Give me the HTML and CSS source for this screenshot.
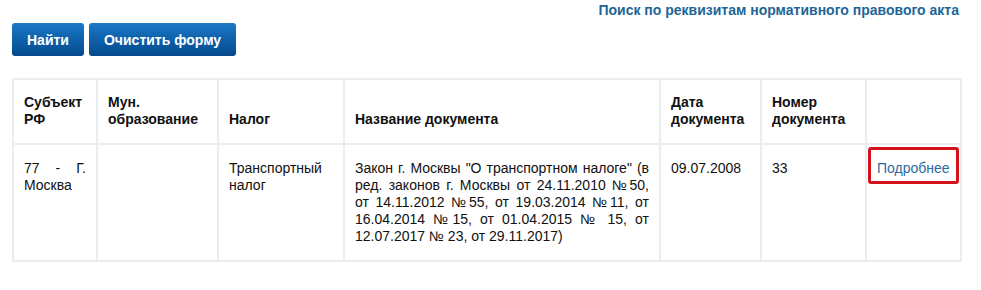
FILE: index.html
```html
<!DOCTYPE html>
<html lang="ru">
<head>
<meta charset="utf-8">
<link rel="stylesheet" href="styles.css">
</head>
<body>
<div class="page">
  <div class="top-link"><a href="#">Поиск по реквизитам нормативного правового акта</a></div>
  <div class="actions">
    <button class="btn">Найти</button>
    <button class="btn">Очистить форму</button>
  </div>
  <table class="results">
    <colgroup>
      <col class="c1"><col class="c2"><col class="c3"><col class="c4"><col class="c5"><col class="c6"><col class="c7">
    </colgroup>
    <thead>
      <tr>
        <th>Субъект РФ</th>
        <th>Мун. образование</th>
        <th>Налог</th>
        <th>Название документа</th>
        <th>Дата документа</th>
        <th>Номер документа</th>
        <th></th>
      </tr>
    </thead>
    <tbody>
      <tr>
        <td class="just">77 - Г. Москва</td>
        <td></td>
        <td>Транспортный налог</td>
        <td class="just">Закон г. Москвы "О транспортном налоге" (в ред. законов г. Москвы от 24.11.2010 №50, от 14.11.2012 №55, от 19.03.2014 №11, от 16.04.2014 №15, от 01.04.2015 № 15, от 12.07.2017 № 23, от 29.11.2017)</td>
        <td>09.07.2008</td>
        <td>33</td>
        <td><a href="#" class="more">Подробнее</a></td>
      </tr>
    </tbody>
  </table>
</div>
</body>
</html>
```

FILE: styles.css
```css
html, body {
  margin: 0;
  padding: 0;
  background: #ffffff;
}
body {
  font-family: "Liberation Sans", Arial, sans-serif;
  font-size: 14px;
  color: #111111;
}
.page {
  padding: 2px 21px 0 12px;
}
.top-link {
  text-align: right;
  line-height: 17px;
  padding-right: 1px;
}
.top-link a {
  font-weight: bold;
  color: #1e6696;
  text-decoration: none;
}
.actions {
  display: flex;
  gap: 5px;
  margin-top: 4px;
}
.btn {
  font-family: "Liberation Sans", Arial, sans-serif;
  font-size: 14px;
  font-weight: bold;
  color: #ffffff;
  height: 33px;
  padding: 0 15px;
  border: none;
  border-radius: 3px;
  background: linear-gradient(to bottom, #1c79c6 0%, #0d5ea8 55%, #074a8c 100%);
  cursor: pointer;
}
.results {
  margin-top: 22px;
  width: 948px;
  border-collapse: collapse;
  table-layout: fixed;
  border: 2px solid #e9eef3;
}
.c1 { width: 84px; }
.c2 { width: 121px; }
.c3 { width: 126px; }
.c4 { width: 316px; }
.c5 { width: 101px; }
.c6 { width: 105px; }
.c7 { width: 95px; }
.results th,
.results td {
  border: 2px solid #e9eef3;
  line-height: 17px;
  text-align: left;
}
.results th {
  font-weight: bold;
  color: #111111;
  vertical-align: bottom;
  padding: 14px 10px 15px 10px;
}
.results td {
  vertical-align: top;
  padding: 15px 10px 15px 10px;
}
.results td.just {
  text-align: justify;
}
.more {
  position: relative;
  color: #2a6ca3;
  text-decoration: none;
}
.more::after {
  content: "";
  position: absolute;
  left: -9px;
  right: -9px;
  top: -13px;
  bottom: -8px;
  border: 3px solid #d3131b;
  border-radius: 3px;
}
```
